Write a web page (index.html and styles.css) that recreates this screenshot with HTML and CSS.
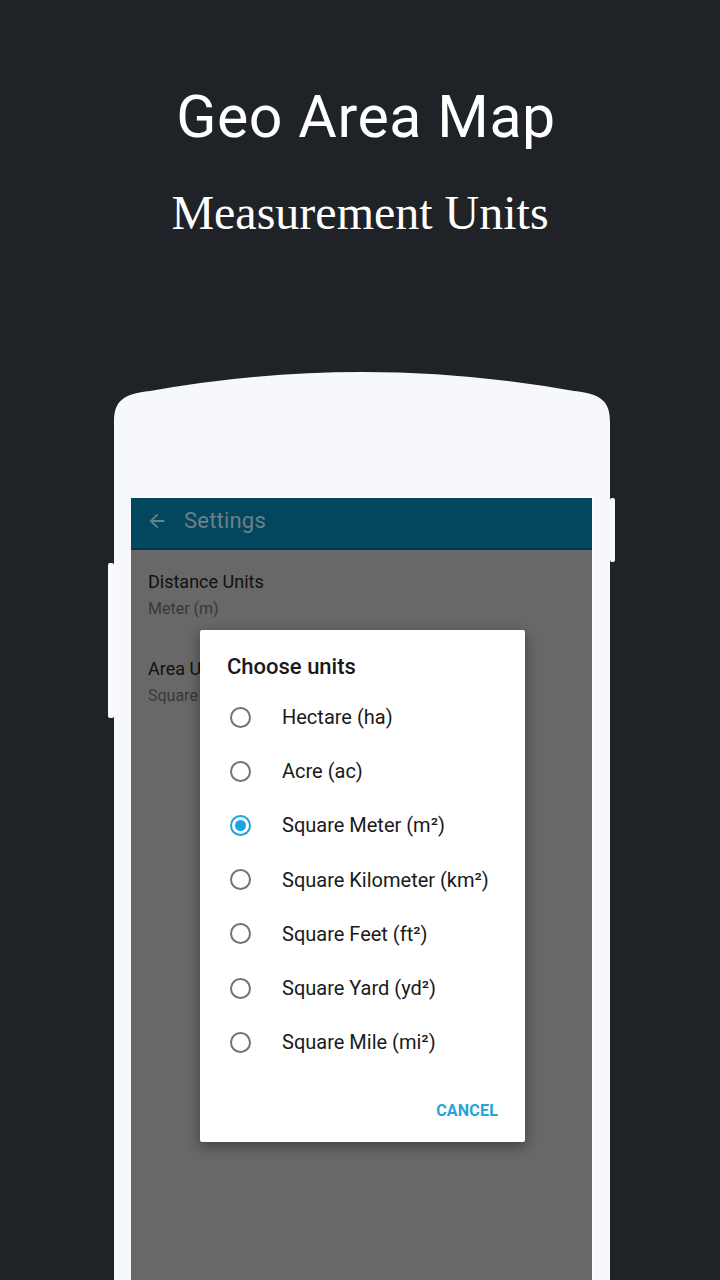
FILE: index.html
```html
<!DOCTYPE html>
<html>
<head>
<meta charset="utf-8">
<link rel="stylesheet" href="styles.css">
</head>
<body>
<header class="hero">
  <h1 class="hero-title">Geo Area Map</h1>
  <p class="hero-sub">Measurement Units</p>
</header>
<div class="phone">
  <span class="side-btn side-btn-right"></span>
  <span class="side-btn side-btn-left"></span>
  <div class="phone-body">
    <div class="screen">
      <div class="toolbar">
        <svg class="back" width="22" height="22" viewBox="0 0 24 24"><path d="M20 11H7.83l5.59-5.59L12 4l-8 8 8 8 1.41-1.41L7.83 13H20v-2z" fill="currentColor"/></svg>
        <span class="toolbar-title">Settings</span>
      </div>
      <div class="prefs">
        <div class="pref">
          <div class="pref-title">Distance Units</div>
          <div class="pref-sub">Meter (m)</div>
        </div>
        <div class="pref">
          <div class="pref-title">Area Units</div>
          <div class="pref-sub">Square Meter (m²)</div>
        </div>
      </div>
      <div class="dialog">
        <div class="dialog-title">Choose units</div>
        <ul class="options">
          <li class="option"><span class="radio"></span><span class="label">Hectare (ha)</span></li>
          <li class="option"><span class="radio"></span><span class="label">Acre (ac)</span></li>
          <li class="option"><span class="radio checked"></span><span class="label">Square Meter (m²)</span></li>
          <li class="option"><span class="radio"></span><span class="label">Square Kilometer (km²)</span></li>
          <li class="option"><span class="radio"></span><span class="label">Square Feet (ft²)</span></li>
          <li class="option"><span class="radio"></span><span class="label">Square Yard (yd²)</span></li>
          <li class="option"><span class="radio"></span><span class="label">Square Mile (mi²)</span></li>
        </ul>
        <div class="actions"><span class="btn">CANCEL</span></div>
      </div>
    </div>
  </div>
</div>
</body>
</html>
```

FILE: styles.css
```css
* { box-sizing: border-box; }
html, body { margin: 0; padding: 0; }
body {
  width: 720px;
  height: 1280px;
  overflow: hidden;
  background: #1f2327;
  font-family: Roboto, "Liberation Sans", sans-serif;
}
.hero {
  height: 372px;
  padding-top: 80px;
  text-align: center;
  color: #ffffff;
}
.hero-title {
  margin: 0;
  padding-left: 12px;
  font-family: Roboto, sans-serif;
  font-weight: 400;
  font-size: 59px;
  line-height: 74px;
  letter-spacing: 0.6px;
}
.hero-sub {
  margin: 31px 0 0;
  font-family: "Liberation Serif", "Times New Roman", serif;
  font-size: 48px;
  line-height: 56px;
}
.phone {
  position: relative;
  margin-left: 114px;
  width: 496px;
  height: 908px;
}
.side-btn {
  position: absolute;
  background: #f9fafd;
  border-radius: 2px;
}
.side-btn-right { left: 496px; top: 126px; width: 5px; height: 64px; }
.side-btn-left { left: -6px; top: 191px; width: 6px; height: 155px; }
.phone-body {
  width: 496px;
  height: 908px;
  background: #f7f8fc;
  padding: 126px 17px 0;
  clip-path: path('M0,50 C0,28 10,22 36,19 Q248,-19 460,19 C486,22 496,28 496,50 L496,908 L0,908 Z');
}
.screen {
  position: relative;
  height: 800px;
  background: #666666;
  border-right: 1px solid #ffffff;
}
.toolbar {
  height: 52px;
  background: #02475e;
  border-bottom: 2px solid #023a4c;
  display: flex;
  align-items: center;
  padding-left: 15px;
  padding-bottom: 5px;
  color: #6d8089;
}
.back { margin-right: 16px; }
.toolbar-title {
  font-size: 22px;
  letter-spacing: 0.2px;
}
.prefs {
  padding: 21px 17px 0;
  display: flex;
  flex-direction: column;
  gap: 39px;
  background: #686868;
  height: 748px;
}
.pref-title {
  font-size: 18px;
  line-height: 22px;
  color: #101010;
}
.pref-sub {
  margin-top: 6px;
  font-size: 16px;
  line-height: 20px;
  color: #383838;
}
.dialog {
  position: absolute;
  left: 69px;
  top: 132px;
  width: 325px;
  height: 512px;
  background: #ffffff;
  border-radius: 2px;
  box-shadow: 0 4px 14px rgba(0,0,0,0.4);
  padding-top: 22px;
}
.dialog-title {
  padding-left: 27px;
  font-size: 22px;
  line-height: 30px;
  font-weight: 500;
  color: #1a1a1a;
}
.options {
  list-style: none;
  margin: 8px 0 0;
  padding: 0;
}
.option {
  height: 54.2px;
  display: flex;
  align-items: center;
  padding-left: 30px;
}
.radio {
  width: 21px;
  height: 21px;
  border: 2px solid #737373;
  border-radius: 50%;
  margin-right: 31px;
  flex: none;
  position: relative;
}
.radio.checked {
  border-color: #1aa3e4;
}
.radio.checked::after {
  content: "";
  position: absolute;
  left: 3px;
  top: 3px;
  width: 11px;
  height: 11px;
  border-radius: 50%;
  background: #1aa3e4;
}
.label {
  font-size: 20px;
  color: #1a1a1a;
}
.actions {
  margin-top: 24px;
  display: flex;
  justify-content: flex-end;
  padding-right: 27px;
}
.btn {
  font-size: 16px;
  line-height: 36px;
  font-weight: 700;
  color: #22a4da;
  letter-spacing: 0.2px;
}
```
